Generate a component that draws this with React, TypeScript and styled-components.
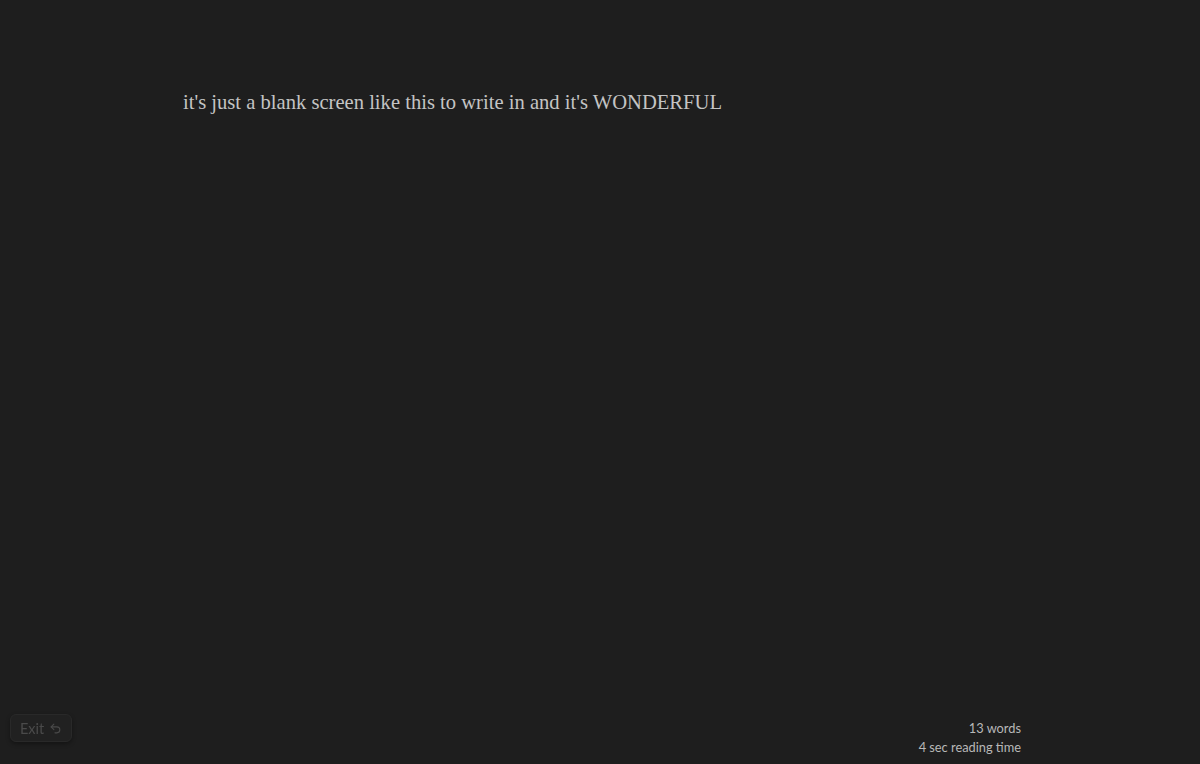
import React from "react"
import styled, { createGlobalStyle } from "styled-components"
import { Undo2 } from "lucide-react"

const GlobalStyle = createGlobalStyle`
	html, body {
		margin: 0;
		padding: 0;
		background-color: #1e1e1e;
	}
	#root {
		height: 100vh;
	}
`

const Page = styled.div`
	display: flex;
	flex-direction: column;
	height: 764px;
	background-color: #1e1e1e;
	overflow: hidden;
`

const Editor = styled.div`
	flex: 1;
	width: 842px;
	margin: 0 auto;
	padding-top: 87px;
	box-sizing: border-box;
`

const Paper = styled.div`
	font-family: "Liberation Serif", "DejaVu Serif", serif;
	font-size: 20.6px;
	line-height: 30px;
	color: #c4c4c4;
	outline: none;
	padding-left: 4px;
`

const Footer = styled.div`
	display: flex;
	flex-direction: column;
	align-items: flex-end;
	gap: 2px;
	width: 842px;
	margin: 0 auto 8px;
	font-family: Lato, "Open Sans", sans-serif;
	font-size: 12.8px;
	line-height: 17px;
	color: #b8b8b8;
`

const ExitButton = styled.button`
	position: fixed;
	left: 10px;
	bottom: 22px;
	display: flex;
	align-items: center;
	gap: 5px;
	height: 28px;
	padding: 0 9px;
	background-color: #212121;
	border: 1px solid #292929;
	border-radius: 6px;
	box-shadow: 0 2px 4px rgba(0, 0, 0, 0.35);
	color: #4a4a4a;
	font-family: Lato, "Open Sans", sans-serif;
	font-size: 14.5px;
	cursor: pointer;
`

const App: React.FC = () => {
	return (
		<Page>
			<GlobalStyle />
			<Editor>
				<Paper contentEditable suppressContentEditableWarning>
					it's just a blank screen like this to write in and it's WONDERFUL
				</Paper>
			</Editor>
			<Footer>
				<span>13 words</span>
				<span>4 sec reading time</span>
			</Footer>
			<ExitButton>
				Exit <Undo2 size={13} strokeWidth={2} />
			</ExitButton>
		</Page>
	)
}

export default App
